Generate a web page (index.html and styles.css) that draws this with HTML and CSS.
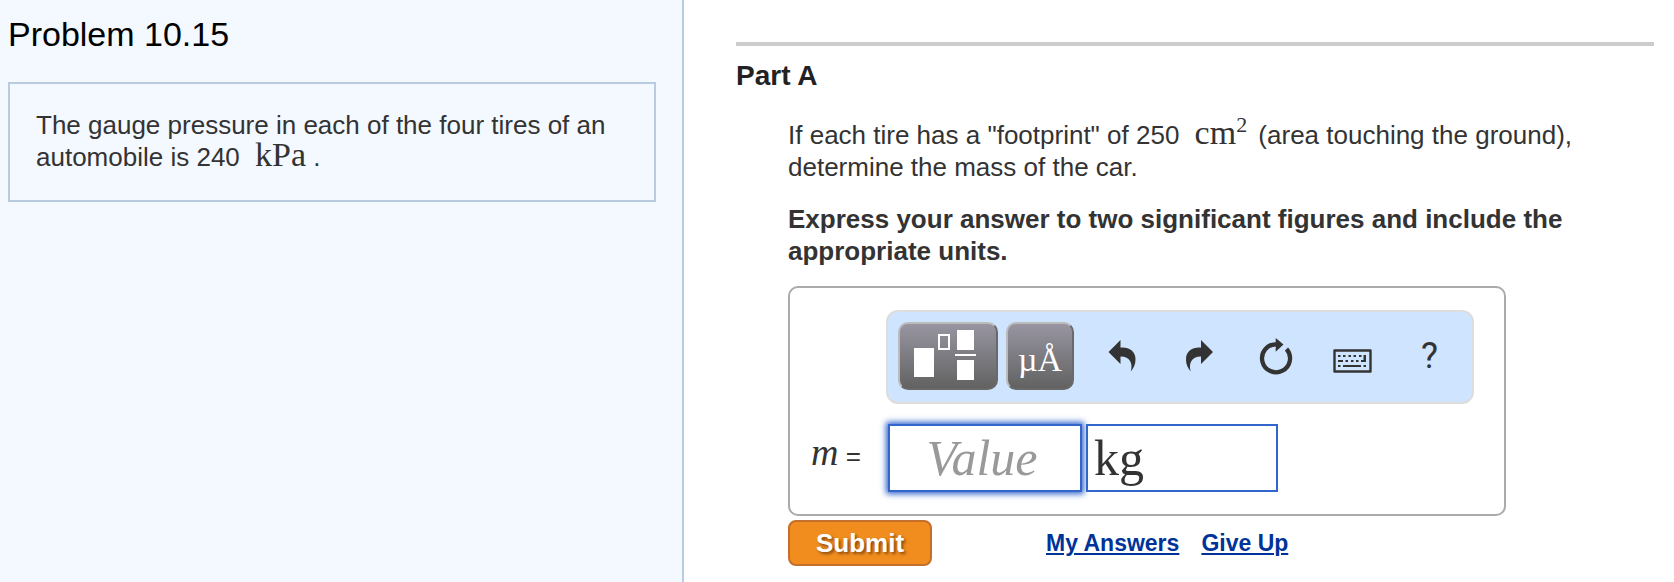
FILE: index.html
```html
<!DOCTYPE html>
<html lang="en">
<head>
<meta charset="utf-8">
<title>Problem 10.15</title>
<link rel="stylesheet" href="styles.css">
</head>
<body>
<div class="page">
  <aside class="problem">
    <h1 class="problem-title">Problem 10.15</h1>
    <p class="problem-text">The gauge pressure in each of the four tires of an automobile is 240 <span class="unit">kPa</span> .</p>
  </aside>
  <main class="part">
    <h2 class="part-title">Part A</h2>
    <div class="part-body">
      <p class="question">If each tire has a "footprint" of 250 <span class="unit">cm<sup>2</sup></span> (area touching the ground), determine the mass of the car.</p>
      <p class="instructions">Express your answer to two significant figures and include the appropriate units.</p>
      <form>
        <div class="answer">
          <div class="toolbar">
            <button type="button" class="tool tool-wide" aria-label="Templates">
              <svg width="96" height="64" viewBox="2 2 96 64" fill="#fff">
                <rect x="16" y="26" width="20" height="29"/>
                <rect x="41" y="13" width="10" height="14" fill="none" stroke="#fff" stroke-width="2"/>
                <rect x="59" y="8" width="17" height="20"/>
                <rect x="57" y="32" width="21" height="2"/>
                <rect x="59" y="38" width="17" height="20"/>
              </svg>
            </button>
            <button type="button" class="tool tool-units" aria-label="Units">µÅ</button>
            <div class="actions">
              <button type="button" class="action" aria-label="Undo">
                <svg width="44" height="44" viewBox="0 0 44 44"><path d="M8.500 18 20.500 6v7.700C29 13 35.500 17 35.500 25.500c0 5-1.800 8-4.700 12C33 30 30.500 22.500 20.500 22.500V30z" fill="#333"/></svg>
              </button>
              <button type="button" class="action" aria-label="Redo">
                <svg width="44" height="44" viewBox="0 0 44 44"><path d="M36 18 24 6v7.700C15.500 13 9 17 9 25.500c0 5 1.800 8 4.700 12C11.500 30 14 22.500 24 22.500V30z" fill="#333"/></svg>
              </button>
              <button type="button" class="action" aria-label="Reset">
                <svg width="44" height="44" viewBox="0 0 44 44"><path d="M22 10.300A14 14 0 1 0 32.500 15" fill="none" stroke="#333" stroke-width="4.300"/><path d="M21.700 4 29.500 10.500 21.700 17.700z" fill="#333"/></svg>
              </button>
              <button type="button" class="action" aria-label="Keyboard shortcuts">
                <svg width="44" height="44" viewBox="0 0 44 44"><path d="M3.500 16.500h36v21h-36z" fill="none" stroke="#333" stroke-width="2.400" stroke-linejoin="round"/><path d="M7 21h2.500v2H7zM12 21h2.500v2H12zM17.500 21H20v2h-2.500zM22.500 21H25v2h-2.500zM28 21h2.500v2H28zM32.500 21H35v7h-5v-2h2.500zM7 26h5v2H7zM14.500 26H17v2h-2.500zM20 26h2.500v2H20zM25 26h2.500v2H25zM7 31h2.500v2H7zM12 31h18v2H12zM32.500 31H35v2h-2.500z" fill="#333"/></svg>
              </button>
              <button type="button" class="action" aria-label="Help">?</button>
            </div>
          </div>
          <label class="variable" for="value"><i>m</i> =</label>
          <div class="fields">
            <input class="field field-value" id="value" type="text" placeholder="Value">
            <input class="field field-units" type="text" value="kg" aria-label="Units">
          </div>
        </div>
        <div class="footer">
          <button type="submit" class="submit">Submit</button>
          <nav class="links">
            <a href="#answers">My Answers</a>
            <a href="#give-up">Give Up</a>
          </nav>
        </div>
      </form>
    </div>
  </main>
</div>
</body>
</html>
```
FILE: styles.css
```css
* {
  box-sizing: border-box;
}

body {
  margin: 0;
  background: #fff;
  color: #333;
  font: 26px/32px "Liberation Sans", Arial, sans-serif;
}

h1, h2, p {
  margin: 0;
}

button, input {
  margin: 0;
  color: inherit;
  font: inherit;
}

.page {
  display: grid;
  grid-template-columns: 684px 1fr;
  min-height: 100vh;
}

.problem {
  padding: 14px 26px 14px 8px;
  border-right: 2px solid #bacbde;
  background: #f4f8ff;
}

.problem-title {
  margin-bottom: 28px;
  color: #000;
  font-size: 34px;
  font-weight: normal;
  line-height: 40px;
}

.problem-text {
  padding: 25px 26px 27px;
  border: 2px solid #b9cbde;
}

.unit {
  margin: 0 0 0 8px;
  font-family: "Liberation Serif", "Times New Roman", serif;
  font-size: 34px;
  line-height: 0;
}

.unit sup {
  margin-right: 4px;
  font-size: 22px;
  line-height: 0;
}

.part {
  padding: 42px 20px 16px 52px;
}

.part-title {
  padding-top: 14px;
  border-top: 4px solid #ccc;
  color: #222;
  font-size: 28px;
  line-height: 32px;
}

.part-body {
  padding: 27px 0 0 52px;
}

.instructions {
  margin: 20px 0 19px;
  font-weight: bold;
}

.answer {
  display: grid;
  grid-template-columns: 75px 1fr;
  row-gap: 20px;
  align-items: center;
  max-width: 718px;
  padding: 22px 30px 22px 21px;
  border: 2px solid #aaa;
  border-radius: 10px;
}

.toolbar {
  display: flex;
  grid-column: 2;
  gap: 8px;
  padding: 10px 4px 12px 10px;
  border: 2px solid #ddd;
  border-radius: 12px;
  background: #cfe5ff;
}

.tool {
  flex: none;
  width: 68px;
  height: 68px;
  padding: 0;
  border: 2px solid;
  border-color: #bbb #696969 #696969 #bbb;
  border-radius: 10px;
  background: linear-gradient(#9895a1, #626262);
  color: #fff;
}

.tool svg, .action svg {
  display: block;
}

.tool-wide {
  width: 100px;
}

.tool-units {
  padding-top: 8px;
  font-family: "Liberation Serif", "Times New Roman", serif;
  font-size: 34px;
}

.actions {
  display: flex;
  flex: 1;
  padding-left: 2px;
}

.action {
  display: flex;
  flex: 1;
  align-items: center;
  justify-content: center;
  padding: 0;
  border: 0;
  background: none;
  font-family: Roboto, sans-serif;
  font-size: 36px;
}

.variable {
  padding-bottom: 4px;
}

.variable i {
  font-family: "Liberation Serif", "Times New Roman", serif;
  font-size: 38px;
  line-height: 0;
}

.fields {
  display: flex;
  gap: 4px;
  padding-left: 2px;
}

.field {
  width: 192px;
  height: 68px;
  padding: 0 6px;
  border: 2px solid #36c;
  border-radius: 0;
  outline: 0;
  background: #fff;
  font-family: "Liberation Serif", "Times New Roman", serif;
  font-size: 50px;
}

.field-value {
  width: 194px;
  padding: 0 12px 0 6px;
  box-shadow: 0 0 6px 2px #36c;
  text-align: center;
}

.field-value::placeholder {
  color: #999;
  font-style: italic;
  opacity: 1;
}

.footer {
  display: flex;
  align-items: center;
  gap: 114px;
  margin-top: 4px;
}

.submit {
  width: 144px;
  height: 46px;
  padding: 0;
  border: 2px solid #c56f2c;
  border-radius: 8px;
  background: #f08d1e;
  color: #fff;
  font-weight: bold;
  text-shadow: 2px 2px 3px #8a4a10;
}

.links {
  display: flex;
  gap: 22px;
  font-size: 23px;
  font-weight: bold;
}

.links a {
  color: #039;
}
```
